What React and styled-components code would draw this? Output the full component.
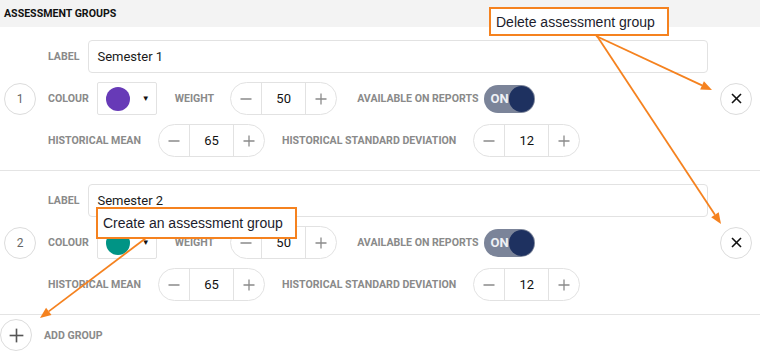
import React from 'react';
import styled, { createGlobalStyle } from 'styled-components';

const GlobalStyle = createGlobalStyle`
  html, body {
    margin: 0;
    padding: 0;
    background: #fff;
  }
  body {
    font-family: Roboto, "Liberation Sans", Arial, sans-serif;
  }
`;

const groups = [
  { id: 1, label: 'Semester 1', colour: '#673ab7', weight: 50, mean: 65, sd: 12 },
  { id: 2, label: 'Semester 2', colour: '#009485', weight: 50, mean: 65, sd: 12 },
];

const Page = styled.div`
  position: relative;
  width: 760px;
  height: 351px;
  overflow: hidden;
  background: #fff;
`;

const Header = styled.div`
  height: 27px;
  display: flex;
  align-items: center;
  padding-left: 4px;
  background: #f3f3f3;
  font-size: 10.6px;
  font-weight: 700;
  color: #111;
`;

const Group = styled.div`
  display: flex;
  align-items: center;
  padding: 13px 8px 13px 4px;
  border-bottom: 1px solid #e4e4e4;
`;

const RoundBadge = styled.div`
  width: 30px;
  height: 30px;
  flex: none;
  border-radius: 50%;
  border: 1px solid #dcdcdc;
  display: flex;
  align-items: center;
  justify-content: center;
  font-size: 12px;
  color: ${(p) => p.$ink || '#666'};
`;

const Fields = styled.div`
  flex: 1;
  display: flex;
  flex-direction: column;
  gap: 9px;
  margin-left: 12px;
  margin-right: 12px;
`;

const Row = styled.div`
  display: flex;
  align-items: center;
  height: 33px;
`;

const Field = styled.div`
  display: flex;
  align-items: center;
  gap: ${(p) => p.$gap || 8}px;
  margin-right: ${(p) => (p.$grow ? 0 : p.$mr || 18)}px;
  flex: ${(p) => (p.$grow ? 1 : 'none')};
`;

const Label = styled.span`
  font-size: 10.6px;
  font-weight: 700;
  color: #8a8a8a;
  white-space: nowrap;
`;

const TextInput = styled.div`
  flex: 1;
  height: 31px;
  border: 1px solid #e2e2e2;
  border-radius: 4px;
  display: flex;
  align-items: center;
  padding-left: 8px;
  font-size: 13px;
  color: #1a1a1a;
`;

const ColourBox = styled.div`
  width: 50px;
  height: 31px;
  border: 1px solid #e2e2e2;
  border-radius: 2px;
  display: flex;
  align-items: center;
  padding-left: 8px;
`;

const Swatch = styled.div`
  width: 24px;
  height: 24px;
  border-radius: 50%;
  background: ${(p) => p.$colour};
`;

const Caret = styled.span`
  margin-left: 12px;
  font-size: 8px;
  color: #111;
`;

const Stepper = styled.div`
  display: flex;
  height: 31px;
  border: 1px solid #e2e2e2;
  border-radius: 17px;
  overflow: hidden;
`;

const StepButton = styled.div`
  width: 30px;
  display: flex;
  align-items: center;
  justify-content: center;
  color: #8a8a8a;
`;

const StepValue = styled.div`
  width: 43px;
  display: flex;
  align-items: center;
  justify-content: center;
  border-left: 1px solid #e2e2e2;
  border-right: 1px solid #e2e2e2;
  font-size: 13px;
  color: #111;
`;

const Toggle = styled.div`
  width: 51px;
  height: 28px;
  border-radius: 14px;
  background: #7b8499;
  display: flex;
  align-items: center;
  justify-content: space-between;
  padding: 0 1px 0 6px;
  box-sizing: border-box;
  margin-left: -2px;
`;

const ToggleText = styled.span`
  font-size: 13px;
  font-weight: 700;
  color: #eef0f4;
`;

const Knob = styled.div`
  width: 26px;
  height: 26px;
  border-radius: 50%;
  background: #1e3160;
`;

const AddRow = styled.div`
  display: flex;
  align-items: center;
  gap: 12px;
  padding-top: 4px;
`;

const Overlay = styled.div`
  position: absolute;
  inset: 0;
  pointer-events: none;
`;

const Callout = styled.div`
  position: absolute;
  left: ${(p) => p.$x}px;
  top: ${(p) => p.$y}px;
  width: ${(p) => p.$w}px;
  height: ${(p) => p.$h}px;
  box-sizing: border-box;
  border: 2px solid #f5821f;
  background: #fff;
  font-family: "Liberation Sans", Arial, sans-serif;
  font-size: 14px;
  color: #1c1c2c;
  padding-left: 5px;
  display: flex;
  align-items: center;
  white-space: nowrap;
`;

const Minus = () => (
  <svg width="12" height="12" viewBox="0 0 12 12">
    <line x1="0.5" y1="6" x2="11.5" y2="6" stroke="currentColor" strokeWidth="1.3" />
  </svg>
);

const Plus = ({ size = 12 }) => (
  <svg width={size} height={size} viewBox="0 0 12 12">
    <line x1="0.5" y1="6" x2="11.5" y2="6" stroke="currentColor" strokeWidth="1.3" />
    <line x1="6" y1="0.5" x2="6" y2="11.5" stroke="currentColor" strokeWidth="1.3" />
  </svg>
);

const Cross = () => (
  <svg width="11" height="11" viewBox="0 0 11 11">
    <line x1="1" y1="1" x2="10" y2="10" stroke="#111" strokeWidth="1.6" />
    <line x1="10" y1="1" x2="1" y2="10" stroke="#111" strokeWidth="1.6" />
  </svg>
);

const NumberStepper = ({ value }) => (
  <Stepper>
    <StepButton><Minus /></StepButton>
    <StepValue>{value}</StepValue>
    <StepButton><Plus /></StepButton>
  </Stepper>
);

const GroupRow = ({ group }) => (
  <Group>
    <RoundBadge>{group.id}</RoundBadge>
    <Fields>
      <Row>
        <Field $grow $gap={9}>
          <Label>LABEL</Label>
          <TextInput>{group.label}</TextInput>
        </Field>
      </Row>
      <Row>
        <Field $gap={8}>
          <Label>COLOUR</Label>
          <ColourBox>
            <Swatch $colour={group.colour} />
            <Caret>▼</Caret>
          </ColourBox>
        </Field>
        <Field $gap={16} $mr={20}>
          <Label>WEIGHT</Label>
          <NumberStepper value={group.weight} />
        </Field>
        <Field>
          <Label>AVAILABLE ON REPORTS</Label>
          <Toggle>
            <ToggleText>ON</ToggleText>
            <Knob />
          </Toggle>
        </Field>
      </Row>
      <Row>
        <Field $gap={17} $mr={17}>
          <Label>HISTORICAL MEAN</Label>
          <NumberStepper value={group.mean} />
        </Field>
        <Field $gap={17}>
          <Label>HISTORICAL STANDARD DEVIATION</Label>
          <NumberStepper value={group.sd} />
        </Field>
      </Row>
    </Fields>
    <RoundBadge><Cross /></RoundBadge>
  </Group>
);

const Arrow = ({ x1, y1, x2, y2 }) => {
  const a = Math.atan2(y2 - y1, x2 - x1);
  const len = 11;
  const w = 4.5;
  const bx = x2 - len * Math.cos(a);
  const by = y2 - len * Math.sin(a);
  const px = -Math.sin(a) * w;
  const py = Math.cos(a) * w;
  return (
    <g>
      <line x1={x1} y1={y1} x2={bx} y2={by} stroke="#f5821f" strokeWidth="1.8" />
      <polygon
        points={`${x2},${y2} ${bx + px},${by + py} ${bx - px},${by - py}`}
        fill="#f5821f"
      />
    </g>
  );
};

export default function App() {
  return (
    <Page>
      <GlobalStyle />
      <Header>ASSESSMENT GROUPS</Header>
      {groups.map((g) => (
        <GroupRow key={g.id} group={g} />
      ))}
      <AddRow>
        <RoundBadge $ink="#555"><Plus size={15} /></RoundBadge>
        <Label>ADD GROUP</Label>
      </AddRow>
      <Overlay>
        <svg width="760" height="351" style={{ position: 'absolute', left: 0, top: 0 }}>
          <Arrow x1={596} y1={36} x2={712} y2={90} />
          <Arrow x1={597} y1={36} x2={721} y2={224} />
          <Arrow x1={146} y1={238} x2={40} y2={318} />
        </svg>
        <Callout $x={489} $y={7} $w={180} $h={29}>Delete assessment group</Callout>
        <Callout $x={96} $y={207} $w={201} $h={32}>Create an assessment group</Callout>
      </Overlay>
    </Page>
  );
}
